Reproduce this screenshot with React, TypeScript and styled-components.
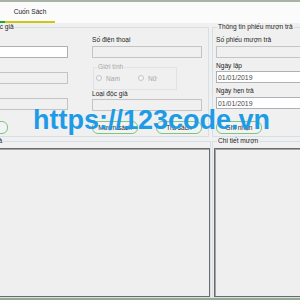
import React from "react";
import styled, { createGlobalStyle } from "styled-components";

const GlobalStyle = createGlobalStyle`
  html, body {
    margin: 0;
    padding: 0;
    width: 300px;
    height: 300px;
    overflow: hidden;
    background: #f0f0f0;
  }
  body {
    font-family: "Liberation Sans", Arial, sans-serif;
    font-size: 6.6px;
    color: #1e1e1e;
  }
  #root { width: 300px; height: 300px; overflow: hidden; }
`;

const Stage = styled.div`
  position: relative;
  width: 300px;
  height: 300px;
  overflow: hidden;
`;

const Window = styled.div`
  margin-left: -46px;
  width: 380px;
  height: 300px;
  display: flex;
  flex-direction: column;
`;

const TopEdge = styled.div`
  height: 2px;
  background: #a9b3a6;
`;

const TabHeader = styled.div`
  display: flex;
  height: 21px;
  background: #fbfbfb;
`;

const Tab = styled.div<{ $width: number; $accent: string }>`
  width: ${(p) => p.$width}px;
  flex: none;
  display: flex;
  align-items: center;
  justify-content: center;
  border-bottom: 2px solid ${(p) => p.$accent};
  color: #222;
  white-space: nowrap;
`;

const TabFill = styled.div`
  flex: 1;
`;

const Row = styled.div`
  display: flex;
  align-items: stretch;
`;

const Group = styled.fieldset<{ $pad: string; $width?: number; $offset?: number }>`
  margin: 0 0 0 ${(p) => p.$offset ?? 0}px;
  padding: ${(p) => p.$pad};
  border: 1px solid #d5dfe5;
  min-width: 0;
  box-sizing: border-box;
  ${(p) => (p.$width ? `width: ${p.$width}px; flex: none;` : "flex: 1;")}
`;

const Legend = styled.legend<{ $inset?: number; $muted?: boolean }>`
  padding: 0 1px;
  margin-left: ${(p) => p.$inset ?? 0}px;
  line-height: 8px;
  color: ${(p) => (p.$muted ? "#a6a6a6" : "#1e1e1e")};
  white-space: nowrap;
`;

const FormGrid = styled.div<{ $cols: string; $colGap?: number }>`
  display: grid;
  grid-template-columns: ${(p) => p.$cols};
  grid-template-rows: 75px 13px;
  column-gap: ${(p) => p.$colGap ?? 0}px;
  row-gap: 10px;
`;

const Stack = styled.div`
  display: flex;
  flex-direction: column;
  gap: 4px;
`;

const FieldBox = styled.div<{ $gap?: number }>`
  display: flex;
  flex-direction: column;
  gap: ${(p) => p.$gap ?? 2}px;
`;

const Label = styled.span`
  line-height: 8px;
  height: 8px;
  white-space: nowrap;
  color: #1e1e1e;
`;

const Input = styled.input<{ $disabled?: boolean }>`
  display: block;
  width: 100%;
  height: 12px;
  box-sizing: border-box;
  margin: 0;
  padding: 0 1px;
  outline: none;
  border: 1px solid ${(p) => (p.$disabled ? "#c4c4c4" : "#aeb0b5")};
  background: ${(p) => (p.$disabled ? "#f0f0f0" : "#ffffff")};
  font-family: "Liberation Sans", Arial, sans-serif;
  font-size: 6.9px;
  color: #4a4a4a;
`;

const GenderGroup = styled.fieldset`
  margin: 5px 0 0 1px;
  padding: 3px 2px 7px 2px;
  width: 84px;
  box-sizing: border-box;
  border: 1px solid #dde3e6;
  min-width: 0;
`;

const RadioRow = styled.div`
  display: flex;
  align-items: center;
  height: 8px;
`;

const RadioOption = styled.label<{ $width?: number }>`
  display: flex;
  align-items: center;
  gap: 4px;
  width: ${(p) => (p.$width ? `${p.$width}px` : "auto")};
  color: #a8a8a8;
  white-space: nowrap;
`;

const RadioDot = styled.span`
  width: 6px;
  height: 6px;
  box-sizing: border-box;
  border-radius: 50%;
  border: 1px solid #c4c4c4;
  background: #f6f6f6;
  flex: none;
`;

const ButtonRow = styled.div`
  display: flex;
  justify-content: space-between;
`;

const Button = styled.button`
  width: 46px;
  height: 13px;
  box-sizing: border-box;
  padding: 0;
  border: 1px solid #7cc67e;
  border-radius: 6px;
  background: #f3f3f3;
  font-family: "Liberation Sans", Arial, sans-serif;
  font-size: 6.6px;
  line-height: 11px;
  color: #2a2a2a;
  white-space: nowrap;
`;

const Panel = styled.div`
  height: 149px;
  box-sizing: border-box;
  border: 1px solid #6b6b6b;
  box-shadow: inset 1px 1px 0 #a4a4a4;
  background: #efefef;
`;

const BottomEdge = styled.div`
  height: 2px;
  background: #97a893;
`;

const Watermark = styled.div`
  position: absolute;
  left: 33px;
  top: 107px;
  font-family: "Liberation Sans", Arial, sans-serif;
  font-weight: bold;
  font-size: 27px;
  line-height: 27px;
  color: #1e9be6;
  white-space: nowrap;
  pointer-events: none;
`;

function Field({ label, value, disabled, gap }: { label?: string; value?: string; disabled?: boolean; gap?: number }) {
  return (
    <FieldBox $gap={gap}>
      <Label>{label ?? ""}</Label>
      <Input readOnly $disabled={disabled} defaultValue={value ?? ""} />
    </FieldBox>
  );
}

export default function App() {
  return (
    <>
      <GlobalStyle />
      <Stage>
        <Window>
          <TopEdge />
          <TabHeader>
            <Tab $width={51} $accent="#22a83a" />
            <Tab $width={50} $accent="#c9c912">Cuốn Sách</Tab>
            <TabFill />
          </TabHeader>

          <Row>
            <Group $width={255} $pad="5px 6px 2px 7px">
              <Legend>Thông tin độc giả</Legend>
              <FormGrid $cols="106px 110px" $colGap={24}>
                <Stack>
                  <Field />
                  <Field disabled />
                  <Field disabled />
                </Stack>
                <div>
                  <Field label="Số điện thoại" disabled />
                  <GenderGroup>
                    <Legend $muted $inset={1}>Giới tính</Legend>
                    <RadioRow>
                      <RadioOption $width={42}>
                        <RadioDot />
                        Nam
                      </RadioOption>
                      <RadioOption>
                        <RadioDot />
                        Nữ
                      </RadioOption>
                    </RadioRow>
                  </GenderGroup>
                  <Field label="Loại độc giả" disabled gap={1} />
                </div>
                <Button aria-label="Tìm kiếm" />
                <ButtonRow>
                  <Button>Mượn sách</Button>
                  <Button>Trả sách</Button>
                </ButtonRow>
              </FormGrid>
            </Group>

            <Group $offset={3} $pad="5px 4px 2px 3px">
              <Legend $inset={1}>Thông tin phiếu mượn trả</Legend>
              <FormGrid $cols="100px">
                <Stack>
                  <Field label="Số phiếu mượn trả" disabled />
                  <Field label="Ngày lập" value="01/01/2019" gap={1} />
                  <Field label="Ngày hẹn trả" value="01/01/2019" />
                </Stack>
                <Button>Ghi nhận</Button>
              </FormGrid>
            </Group>
          </Row>

          <Row>
            <Group $width={257} $pad="3px 0 0 0">
              <Legend>Phiếu mượn trả</Legend>
              <Panel />
            </Group>
            <Group $offset={1} $pad="3px 0 0 1px">
              <Legend $inset={3}>Chi tiết mượn</Legend>
              <Panel />
            </Group>
          </Row>
          <BottomEdge />
        </Window>
        <Watermark>https://123code.vn</Watermark>
      </Stage>
    </>
  );
}
